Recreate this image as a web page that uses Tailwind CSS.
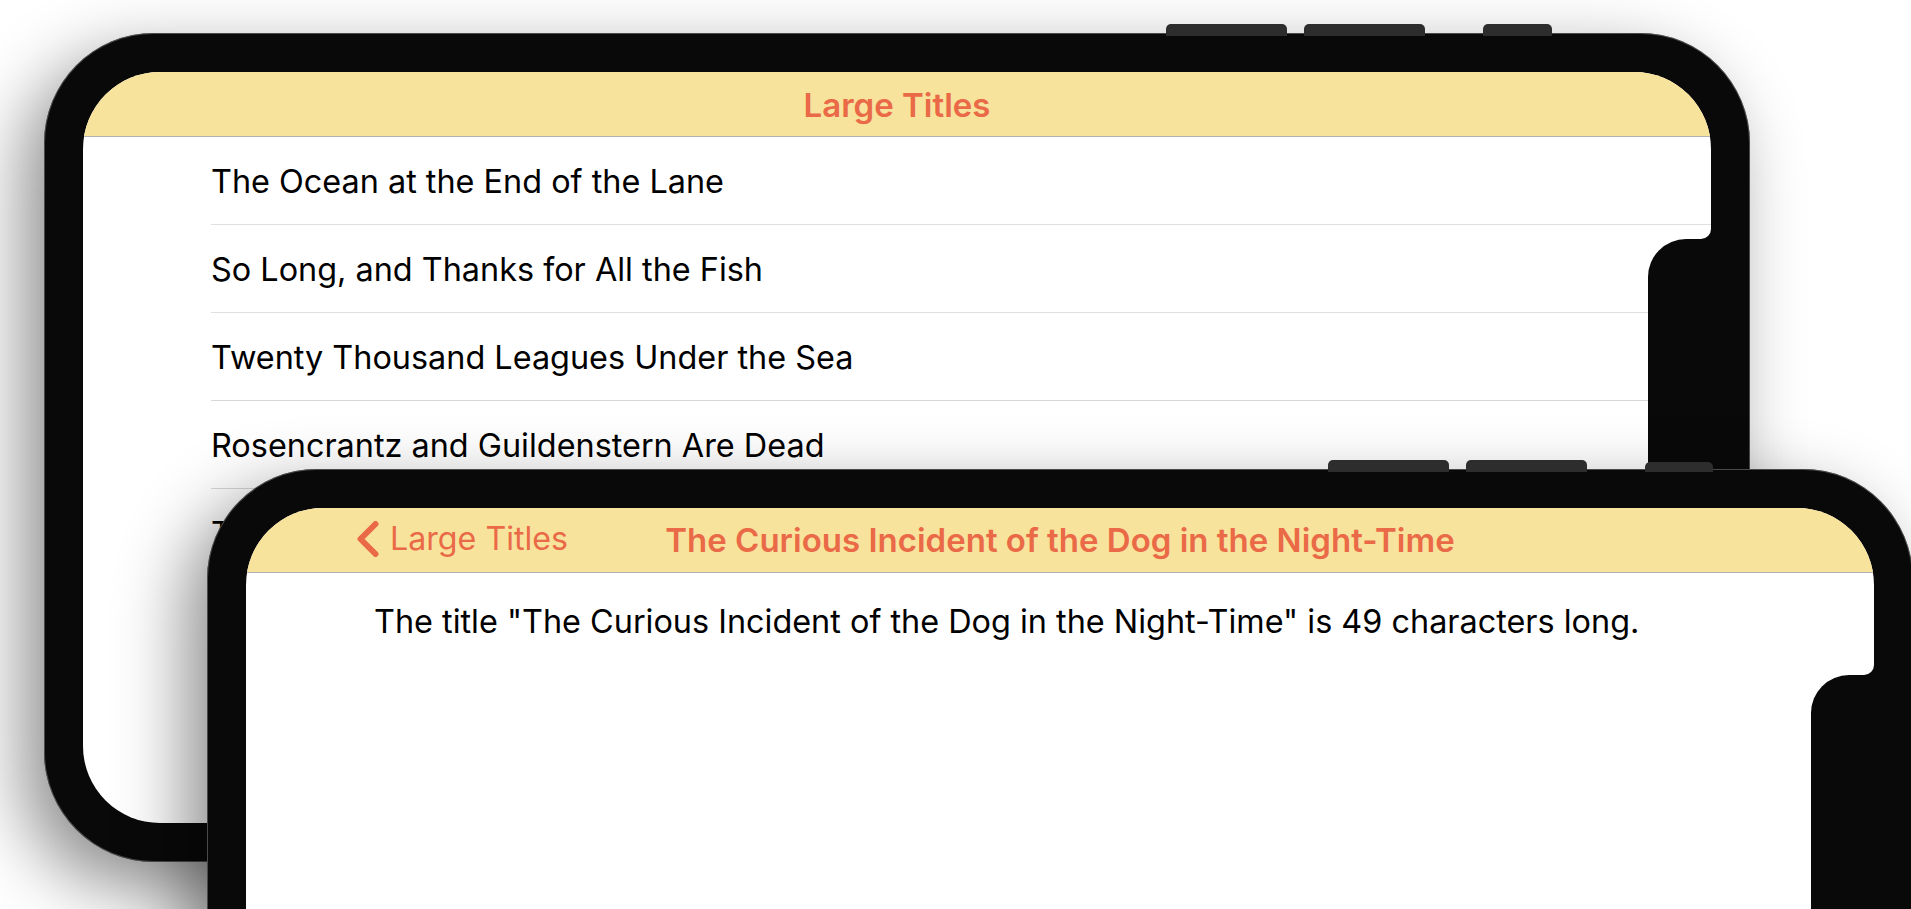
<!DOCTYPE html>
<html lang="en">
<head>
  <meta charset="UTF-8" />
  <title>Large Titles</title>
  <script src="https://cdn.jsdelivr.net/npm/@tailwindcss/browser@4"></script>
</head>
<body class="bg-white">
  <div class="relative w-[1911px] h-[909px] overflow-hidden bg-white font-['Inter',sans-serif] text-black">

    <!-- Back phone: list -->
    <div class="absolute left-[44px] top-[33px] w-[1706px] h-[829px] p-[39px] rounded-[110px] bg-[#090909] ring-1 ring-inset ring-[#777777]/60 shadow-[-20px_25px_70px_rgba(0,0,0,0.45)]">
      <div class="absolute -top-[9px] left-[1122px] w-[121px] h-[12px] rounded-t-[5px] bg-[#2d2d2d]"></div>
      <div class="absolute -top-[9px] left-[1260px] w-[121px] h-[12px] rounded-t-[5px] bg-[#2d2d2d]"></div>
      <div class="absolute -top-[9px] left-[1439px] w-[69px] h-[12px] rounded-t-[5px] bg-[#2d2d2d]"></div>

      <div class="relative w-full h-full overflow-hidden rounded-[77px] bg-white">
        <div class="flex items-center justify-center h-[65px] pt-[3px] bg-[#f7e39c] border-b border-[#b0b0b0]">
          <span class="text-[33px] font-semibold text-[#ea6a48]">Large Titles</span>
        </div>
        <ul class="ml-[128px] text-[32.4px]">
          <li class="flex items-center h-[88px] pt-[4px] border-b border-[#e0e0e0]">The Ocean at the End of the Lane</li>
          <li class="flex items-center h-[88px] pt-[4px] border-b border-[#e0e0e0]">So Long, and Thanks for All the Fish</li>
          <li class="flex items-center h-[88px] pt-[4px] border-b border-[#d8d8d8]">Twenty Thousand Leagues Under the Sea</li>
          <li class="flex items-center h-[88px] pt-[4px] border-b border-[#d8d8d8]">Rosencrantz and Guildenstern Are Dead</li>
          <li class="flex items-center h-[88px] pt-[4px] border-b border-[#d8d8d8]">The Curious Incident of the Dog in the Night-Time</li>
        </ul>
        <div class="absolute right-0 top-[157px] w-[10px] h-[10px] bg-[#090909]"><div class="w-full h-full rounded-br-[10px] bg-white"></div></div>
        <div class="absolute right-0 top-[167px] bottom-0 w-[63px] rounded-tl-[38px] bg-[#090909]"></div>
      </div>
    </div>

    <!-- Front phone: detail -->
    <div class="absolute left-[207px] top-[469px] w-[1706px] h-[829px] p-[39px] rounded-[110px] bg-[#090909] ring-1 ring-inset ring-[#777777]/60 shadow-[-20px_25px_70px_rgba(0,0,0,0.45)]">
      <div class="absolute -top-[9px] left-[1121px] w-[121px] h-[12px] rounded-t-[5px] bg-[#2d2d2d]"></div>
      <div class="absolute -top-[9px] left-[1259px] w-[121px] h-[12px] rounded-t-[5px] bg-[#2d2d2d]"></div>
      <div class="absolute -top-[7px] left-[1438px] w-[68px] h-[10px] rounded-t-[5px] bg-[#2d2d2d]"></div>

      <div class="relative w-full h-full overflow-hidden rounded-[77px] bg-white">
        <div class="relative flex items-center justify-center h-[65px] pt-[2px] bg-[#f7e39c] border-b border-[#b0b0b0]">
          <div class="absolute left-[111px] top-[7px] flex items-center gap-[11px] text-[#ea6a48]">
            <svg class="-mt-[1px]" width="22" height="36" viewBox="0 0 22 36" fill="none" stroke="#ea6a48" stroke-width="6" stroke-linecap="round" stroke-linejoin="round"><path d="M18.500 3 L3.500 18 L18.500 33"/></svg>
            <span class="text-[32.200px] font-normal">Large Titles</span>
          </div>
          <span class="text-[33px] font-semibold text-[#ea6a48]">The Curious Incident of the Dog in the Night-Time</span>
        </div>
        <p class="pl-[128px] pt-[25px] text-[32.4px]">The title "The Curious Incident of the Dog in the Night-Time" is 49 characters long.</p>
        <div class="absolute right-0 top-[157px] w-[10px] h-[10px] bg-[#090909]"><div class="w-full h-full rounded-br-[10px] bg-white"></div></div>
        <div class="absolute right-0 top-[167px] bottom-0 w-[63px] rounded-tl-[38px] bg-[#090909]"></div>
      </div>
    </div>
  </div>
</body>
</html>
